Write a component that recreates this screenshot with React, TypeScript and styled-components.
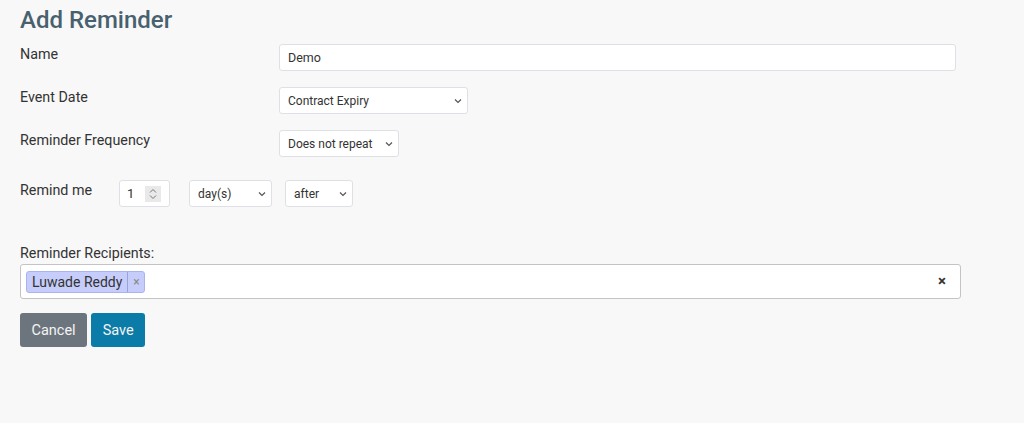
import React from 'react';
import styled, { createGlobalStyle } from 'styled-components';

const GlobalStyle = createGlobalStyle`
  html, body {
    margin: 0;
    padding: 0;
    background: #f8f8f8;
    font-family: Roboto, "Liberation Sans", sans-serif;
    color: #333;
  }
  * { box-sizing: border-box; }
`;

const Page = styled.div`
  padding: 6px 20px 20px 20px;
  width: 961px;
`;

const Title = styled.h2`
  margin: 0 0 9px 0;
  font-size: 24px;
  line-height: 29px;
  font-weight: 500;
  color: #48616f;
`;

const Row = styled.div`
  display: grid;
  grid-template-columns: 259px 1fr;
  align-items: start;
  margin-bottom: 16px;
`;

const Label = styled.label`
  font-size: 14.3px;
  line-height: 20px;
  color: #333;
`;

const TextInput = styled.input`
  width: 677px;
  height: 27px;
  padding: 0 8px;
  border: 1px solid #dde1e5;
  border-radius: 3px;
  background: #fff;
  font-family: Roboto, "Liberation Sans", sans-serif;
  font-size: 12.5px;
  color: #333;
`;

const SelectWrap = styled.div<{ $w: number }>`
  position: relative;
  width: ${p => p.$w}px;
  height: 27px;
`;

const Select = styled.select`
  appearance: none;
  width: 100%;
  height: 100%;
  padding: 0 18px 0 8px;
  border: 1px solid #dde1e5;
  border-radius: 3px;
  background: #fff;
  font-family: Roboto, "Liberation Sans", sans-serif;
  font-size: 12px;
  color: #333;
`;

const Chevron = styled.svg`
  position: absolute;
  right: 6px;
  top: 11px;
  width: 8px;
  height: 6px;
  pointer-events: none;
`;

const Dropdown = ({ w, value }: { w: number; value: string }) => (
  <SelectWrap $w={w}>
    <Select defaultValue={value}>
      <option>{value}</option>
    </Select>
    <Chevron viewBox="0 0 8 6">
      <path d="M1 1.5 L4 4.5 L7 1.5" fill="none" stroke="#555" strokeWidth="1.2" />
    </Chevron>
  </SelectWrap>
);

const RemindRow = styled.div`
  display: flex;
  align-items: flex-start;
  margin-top: 23px;
`;

const RemindLabel = styled(Label)`
  width: 99px;
`;

const NumberBox = styled.div`
  position: relative;
  width: 51px;
  height: 27px;
  margin-right: 19px;
  border: 1px solid #dde1e5;
  border-radius: 3px;
  background: #fff;
  font-size: 13px;
  display: flex;
  align-items: center;
  padding-left: 7px;
`;

const Spinner = styled.div`
  position: absolute;
  right: 8px;
  top: 5px;
  width: 16px;
  height: 16px;
  background: #e9e9e9;
  display: flex;
  align-items: center;
  justify-content: center;
`;

const Spacer = styled.div<{ $w: number }>`
  width: ${p => p.$w}px;
`;

const RecipientsLabel = styled(Label)`
  display: block;
  margin-top: 36px;
  margin-bottom: 1px;
`;

const MultiBox = styled.div`
  position: relative;
  width: 941px;
  height: 35px;
  border: 1px solid #c4c4c4;
  border-radius: 3px;
  background: #fff;
  display: flex;
  align-items: center;
  padding-left: 5px;
`;

const Tag = styled.div`
  display: flex;
  align-items: stretch;
  height: 22px;
  background: #c6cdfb;
  border: 1px solid #a9b3f0;
  border-radius: 3px;
  font-size: 14px;
  color: #333;
`;

const TagText = styled.span`
  padding: 0 5px;
  line-height: 20px;
`;

const TagRemove = styled.span`
  width: 17px;
  border-left: 1px solid #9aa3d6;
  color: #888;
  font-size: 12px;
  line-height: 20px;
  text-align: center;
`;

const ClearAll = styled.span`
  position: absolute;
  right: 14px;
  top: 7px;
  font-size: 15px;
  font-weight: 700;
  color: #333;
`;

const Buttons = styled.div`
  display: flex;
  gap: 4px;
  margin-top: 14px;
`;

const Button = styled.button<{ $primary?: boolean }>`
  height: 34px;
  padding: 0 11.5px;
  border: none;
  border-radius: 3px;
  background: ${p => (p.$primary ? '#0b7ba7' : '#6c757d')};
  color: #f4f4f4;
  font-family: Roboto, "Liberation Sans", sans-serif;
  font-size: 14.5px;
`;

export default function App() {
  return (
    <Page>
      <GlobalStyle />
      <Title>Add Reminder</Title>
      <Row>
        <Label>Name</Label>
        <TextInput defaultValue="Demo" />
      </Row>
      <Row>
        <Label>Event Date</Label>
        <Dropdown w={189} value="Contract Expiry" />
      </Row>
      <Row>
        <Label>Reminder Frequency</Label>
        <Dropdown w={120} value="Does not repeat" />
      </Row>
      <RemindRow>
        <RemindLabel>Remind me</RemindLabel>
        <NumberBox>
          1
          <Spinner>
            <svg width="8" height="12" viewBox="0 0 8 12">
              <path d="M1 4.5 L4 1.5 L7 4.5 M1 7.5 L4 10.5 L7 7.5" fill="none" stroke="#777" strokeWidth="1" />
            </svg>
          </Spinner>
        </NumberBox>
        <Dropdown w={83} value="day(s)" />
        <Spacer $w={13} />
        <Dropdown w={68} value="after" />
      </RemindRow>
      <RecipientsLabel>Reminder Recipients:</RecipientsLabel>
      <MultiBox>
        <Tag>
          <TagText>Luwade Reddy</TagText>
          <TagRemove>×</TagRemove>
        </Tag>
        <ClearAll>×</ClearAll>
      </MultiBox>
      <Buttons>
        <Button>Cancel</Button>
        <Button $primary>Save</Button>
      </Buttons>
    </Page>
  );
}
